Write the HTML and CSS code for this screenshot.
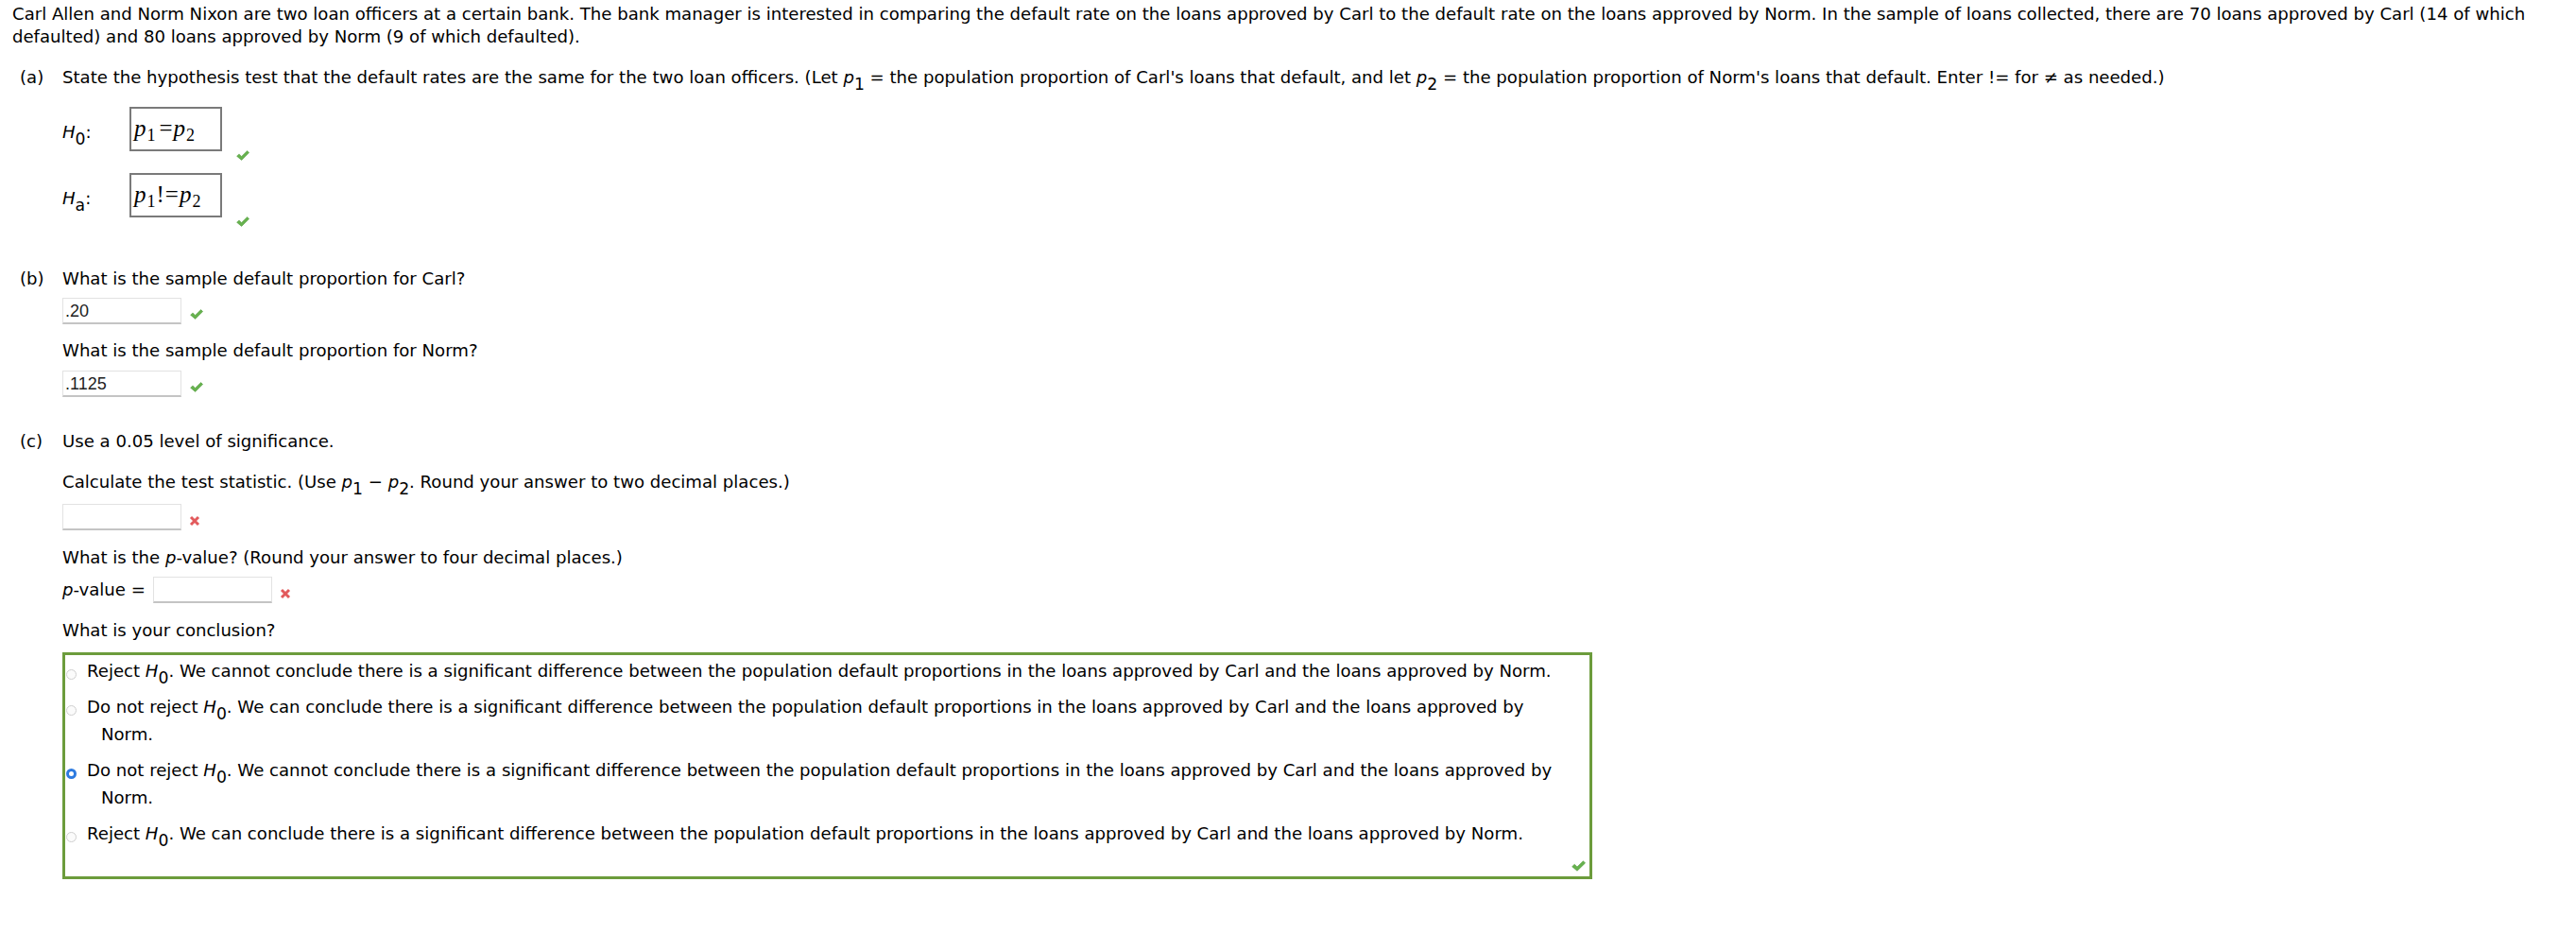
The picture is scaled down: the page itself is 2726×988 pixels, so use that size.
FILE: index.html
```html
<!DOCTYPE html>
<html lang="en">
<head>
<meta charset="utf-8">
<title>Two proportions test</title>
<link rel="stylesheet" href="styles.css">
</head>
<body>
<p class="intro">Carl Allen and Norm Nixon are two loan officers at a certain bank. The bank manager is interested in comparing the default rate on the loans approved by Carl to the default rate on the loans approved by Norm. In the sample of loans collected, there are 70 loans approved by Carl (14 of which defaulted) and 80 loans approved by Norm (9 of which defaulted).</p>

<section class="part part-a">
  <div class="plabel">(a)</div>
  <div class="pbody">
    <p class="q">State the hypothesis test that the default rates are the same for the two loan officers. (Let <i>p</i><sub>1</sub> = the population proportion of Carl's loans that default, and let <i>p</i><sub>2</sub> = the population proportion of Norm's loans that default. Enter != for &ne; as needed.)</p>
    <div class="hyp hyp-first">
      <span class="hlabel"><i>H</i><sub>0</sub>:</span>
      <span class="mathbox"><i class="mi">p</i><span class="msub">1</span><span class="mo">=</span><i class="mi">p</i><span class="msub">2</span></span>
      <svg class="check check-hyp" viewBox="0 0 14 11" width="14" height="11"><path d="M0.6 6.2 L3 3.9 L5.6 6.4 L11.6 0.6 L13.6 2.6 L5.6 10.4 Z"/></svg>
    </div>
    <div class="hyp">
      <span class="hlabel"><i>H</i><sub>a</sub>:</span>
      <span class="mathbox"><i class="mi">p</i><span class="msub">1</span><span class="mbang">!</span><span class="mo mo-tight">=</span><i class="mi">p</i><span class="msub">2</span></span>
      <svg class="check check-hyp" viewBox="0 0 14 11" width="14" height="11"><path d="M0.6 6.2 L3 3.9 L5.6 6.4 L11.6 0.6 L13.6 2.6 L5.6 10.4 Z"/></svg>
    </div>
  </div>
</section>

<section class="part part-b">
  <div class="plabel">(b)</div>
  <div class="pbody">
    <p class="q">What is the sample default proportion for Carl?</p>
    <div class="answer a1">
      <span class="field">.20</span>
      <svg class="check" viewBox="0 0 14 11" width="14" height="11"><path d="M0.6 6.2 L3 3.9 L5.6 6.4 L11.6 0.6 L13.6 2.6 L5.6 10.4 Z"/></svg>
    </div>
    <p class="q q2">What is the sample default proportion for Norm?</p>
    <div class="answer a2">
      <span class="field">.1125</span>
      <svg class="check" viewBox="0 0 14 11" width="14" height="11"><path d="M0.6 6.2 L3 3.9 L5.6 6.4 L11.6 0.6 L13.6 2.6 L5.6 10.4 Z"/></svg>
    </div>
  </div>
</section>

<section class="part part-c">
  <div class="plabel">(c)</div>
  <div class="pbody">
    <p class="q">Use a 0.05 level of significance.</p>
    <p class="q q-calc">Calculate the test statistic. (Use <i>p</i><sub>1</sub> &minus; <i>p</i><sub>2</sub>. Round your answer to two decimal places.)</p>
    <div class="answer a3">
      <span class="field"></span>
      <svg class="cross" viewBox="0 0 12 12" width="12" height="12"><path d="M2 2 L10 10 M10 2 L2 10"/></svg>
    </div>
    <p class="q q-pv">What is the <i>p</i>-value? (Round your answer to four decimal places.)</p>
    <div class="answer a4">
      <span class="pvlabel"><i>p</i>-value =</span>
      <span class="field"></span>
      <svg class="cross" viewBox="0 0 12 12" width="12" height="12"><path d="M2 2 L10 10 M10 2 L2 10"/></svg>
    </div>
    <p class="q q-con">What is your conclusion?</p>
    <div class="choices">
      <div class="opt"><span class="radio"></span><span class="otext">Reject <i>H</i><sub>0</sub>. We cannot conclude there is a significant difference between the population default proportions in the loans approved by Carl and the loans approved by Norm.</span></div>
      <div class="opt"><span class="radio"></span><span class="otext">Do not reject <i>H</i><sub>0</sub>. We can conclude there is a significant difference between the population default proportions in the loans approved by Carl and the loans approved by Norm.</span></div>
      <div class="opt"><span class="radio radio-on"></span><span class="otext">Do not reject <i>H</i><sub>0</sub>. We cannot conclude there is a significant difference between the population default proportions in the loans approved by Carl and the loans approved by Norm.</span></div>
      <div class="opt"><span class="radio"></span><span class="otext">Reject <i>H</i><sub>0</sub>. We can conclude there is a significant difference between the population default proportions in the loans approved by Carl and the loans approved by Norm.</span></div>
      <div class="choices-foot">
        <svg class="check" viewBox="0 0 14 11" width="15" height="12"><path d="M0.6 6.2 L3 3.9 L5.6 6.4 L11.6 0.6 L13.6 2.6 L5.6 10.4 Z"/></svg>
      </div>
    </div>
  </div>
</section>
</body>
</html>
```

FILE: styles.css
```css
html, body {
  background: #ffffff;
}

body {
  margin: 0;
  padding: 3px 13px 0 13px;
  font-family: "DejaVu Sans", Verdana, sans-serif;
  font-size: 18.1px;
  color: #000000;
  line-height: 24px;
}

p {
  margin: 0;
}

i {
  font-style: italic;
}

sub {
  font-size: 0.95em;
  vertical-align: -0.42em;
  line-height: 0;
}

.intro {
  line-height: 24px;
}

.part {
  display: grid;
  grid-template-columns: 45px 1fr;
  padding-left: 8px;
}

.part-a {
  margin-top: 19px;
}

.part-b {
  margin-top: 53px;
}

.part-c {
  margin-top: 35px;
}

.plabel {
  line-height: 24px;
}

.q {
  line-height: 24px;
}

/* hypotheses */
.hyp {
  display: flex;
  align-items: center;
  margin-top: 23px;
}

.hyp-first {
  margin-top: 19px;
}

.hlabel {
  width: 71px;
  padding-top: 6px;
  line-height: 24px;
}

.mathbox {
  box-sizing: border-box;
  width: 98px;
  height: 47px;
  border: 2px solid #7a7a7a;
  padding-left: 3px;
  font-family: "Liberation Serif", "Times New Roman", serif;
  font-size: 25px;
  line-height: 41px;
  white-space: nowrap;
}

.mi {
  font-style: italic;
}

.msub {
  font-size: 18px;
  vertical-align: -5px;
  line-height: 0;
  margin-left: 1px;
}

.mo {
  margin-left: 4px;
  margin-right: 1px;
}

.mo-tight {
  margin-left: 1px;
}

.mbang {
  margin-left: 1px;
}

.check {
  display: block;
  fill: #67b24e;
  stroke: #4c973a;
  stroke-width: 0.5;
}

.check-hyp {
  align-self: flex-end;
  margin-left: 15px;
  margin-bottom: -10px;
}

.cross {
  display: block;
  fill: none;
  stroke: #e25a5c;
  stroke-width: 3;
}

/* answer fields */
.answer {
  display: flex;
  align-items: flex-end;
}

.field {
  box-sizing: border-box;
  display: block;
  width: 126px;
  height: 28px;
  border: 1px solid #e2e2e2;
  border-bottom: 2px solid #c4c4c4;
  padding: 0 2px;
  font-family: "Liberation Sans", Arial, sans-serif;
  font-size: 18px;
  line-height: 26px;
  color: #222222;
}

.answer .check {
  margin-left: 9px;
  margin-bottom: 5px;
}

.answer .cross {
  margin-left: 8px;
  margin-bottom: 4px;
}

.a1 {
  margin-top: 8px;
}

.q2 {
  margin-top: 16px;
}

.a2 {
  margin-top: 9px;
}

.q-calc {
  margin-top: 19px;
}

.a3 {
  margin-top: 11px;
}

.q-pv {
  margin-top: 17px;
}

.a4 {
  margin-top: 8px;
  align-items: center;
}

.a4 .cross {
  align-self: flex-end;
}

.pvlabel {
  width: 96px;
  line-height: 24px;
}

.q-con {
  margin-top: 17px;
}

/* conclusion choices */
.choices {
  margin-top: 11px;
  border: 3px solid #6c9c3c;
  padding: 2px 27px 5px 1px;
  margin-right: 1028px;
}

.opt {
  display: flex;
  align-items: flex-start;
  margin-bottom: 9px;
}

.opt:last-of-type {
  margin-bottom: 0;
}

.radio {
  flex: none;
  box-sizing: border-box;
  width: 11px;
  height: 11px;
  margin-top: 13px;
  margin-right: 11px;
  border-radius: 50%;
  border: 1px solid #cfcfcf;
  background: #fbfbfb;
}

.radio-on {
  border: 3px solid #2d7be0;
  background: #ffffff;
}

.otext {
  line-height: 29px;
  padding-left: 15px;
  text-indent: -15px;
}

.choices-foot {
  display: flex;
  justify-content: flex-end;
  margin-top: 14px;
  margin-right: -23px;
}
```
